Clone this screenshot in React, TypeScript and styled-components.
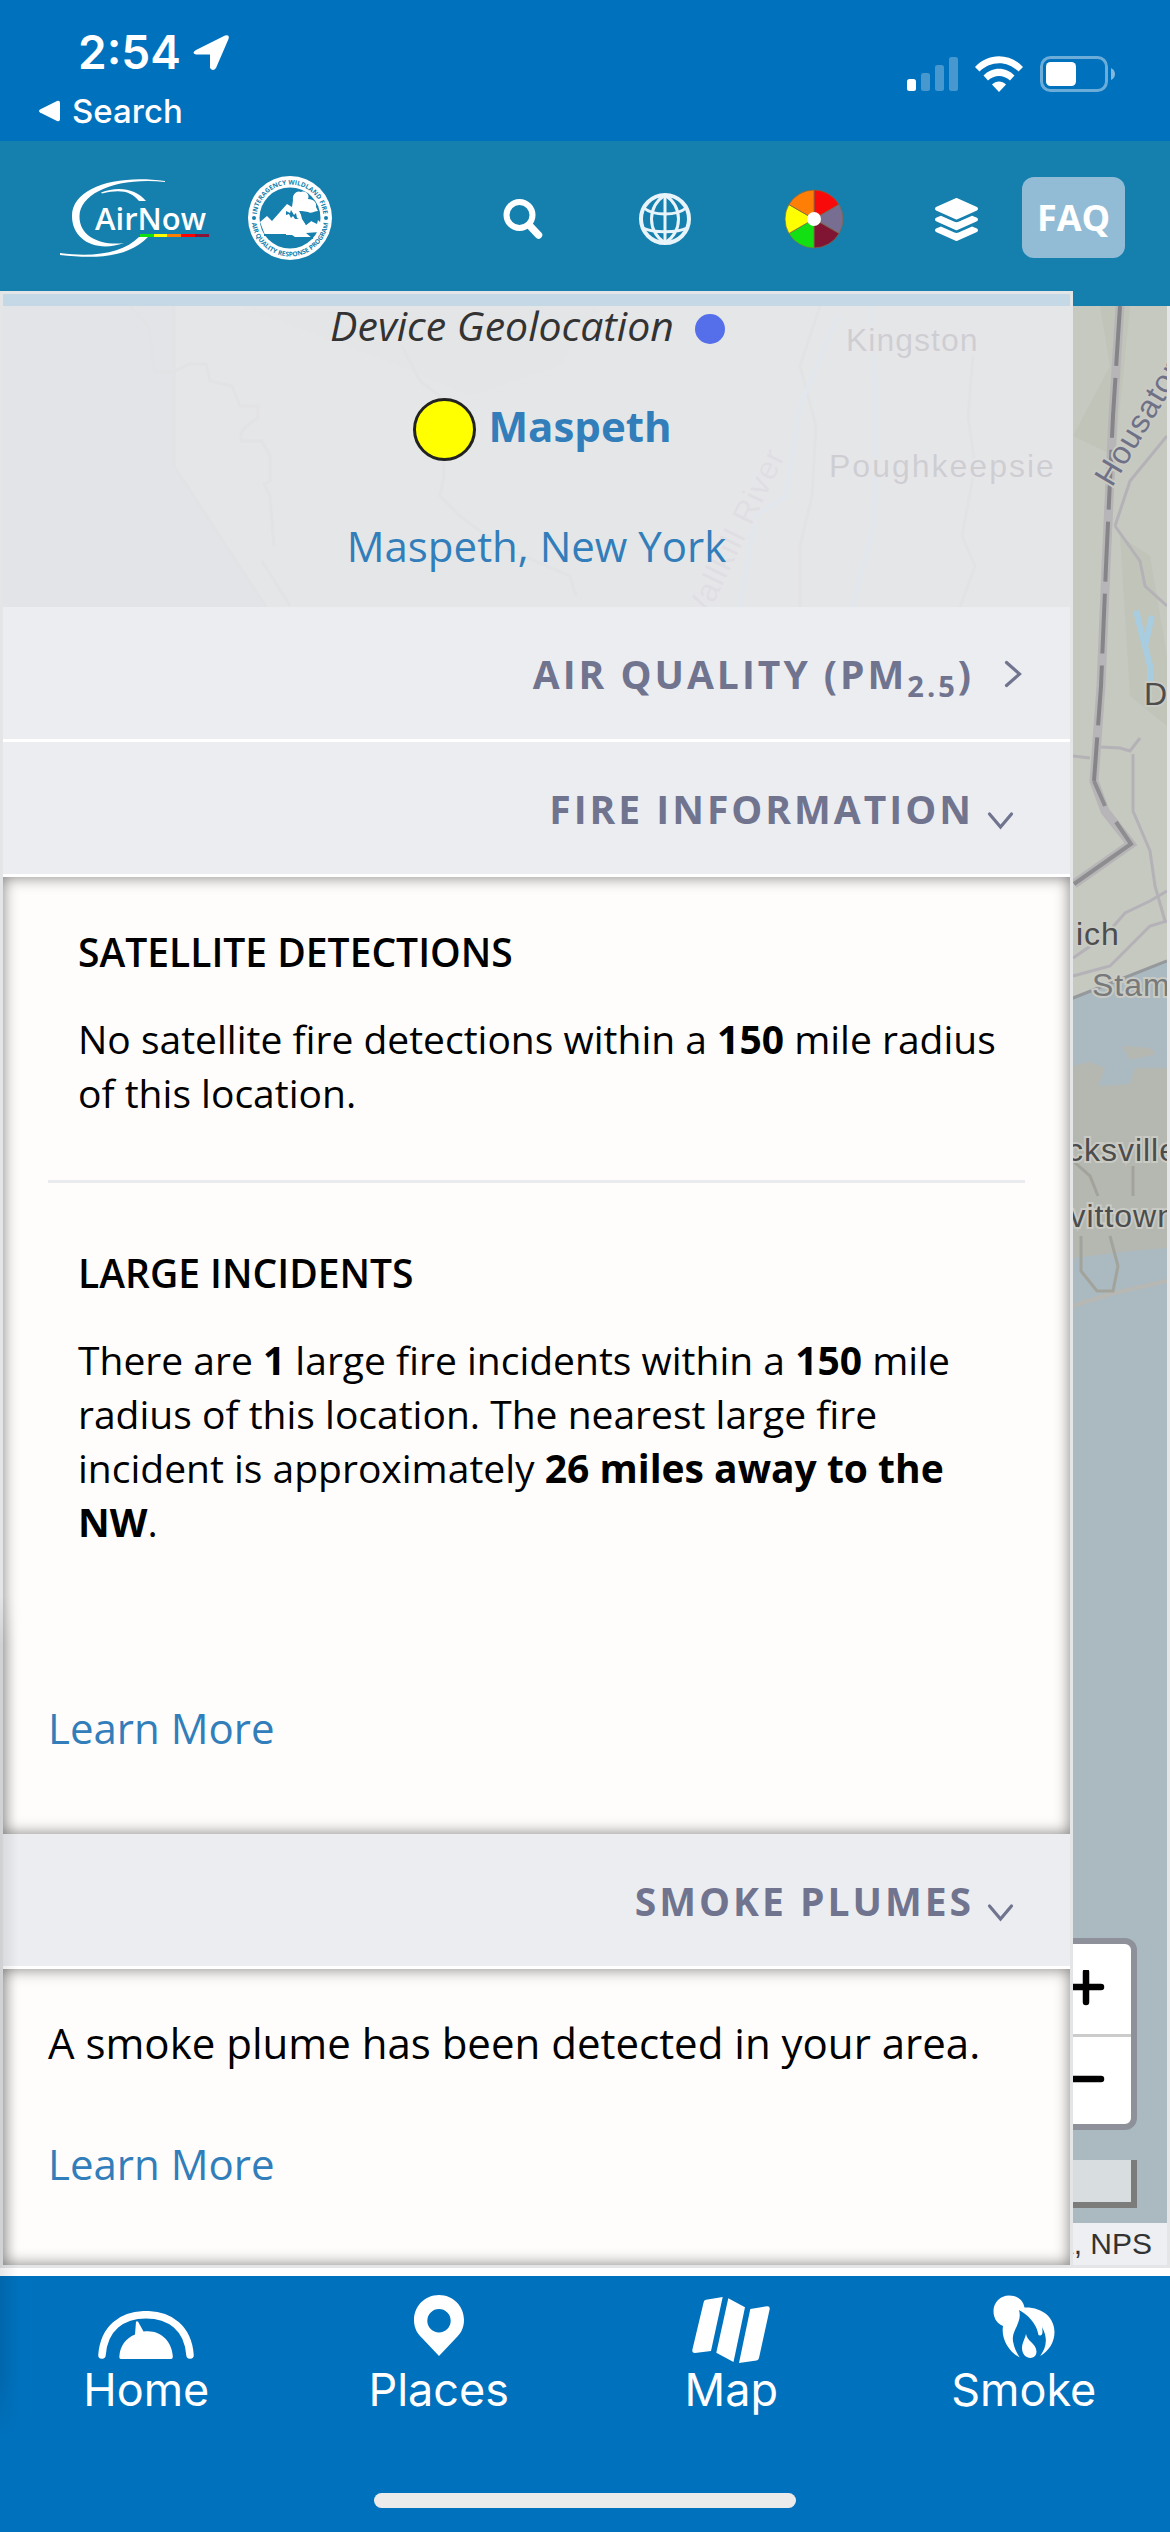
import React from "react";
import styled, { createGlobalStyle } from "styled-components";
import { FaLayerGroup } from "react-icons/fa";

const color = {
  brand: "#0071bd",
  header: "#157fad",
  link: "#327eba",
  heading: "#70748f",
  row: "#ecedf1",
  edge: "#e4e5e6",
  paper: "#fefdfb",
};

const uiFont = `Inter, "Liberation Sans", sans-serif`;
const textFont = `"Open Sans", "Noto Sans", sans-serif`;

const GlobalStyle = createGlobalStyle`
  *, *::before, *::after { box-sizing: border-box; }
  body { margin: 0; background: #fff; font-family: ${textFont}; color: #000; }
  h1, h2, h3, p { margin: 0; }
  a { text-decoration: none; }
  button { border: 0; margin: 0; padding: 0; background: none; font: inherit; color: inherit; cursor: pointer; }
  svg { display: block; flex: none; }
`;

const Screen = styled.div`
  position: relative;
  min-height: 100vh;
  display: flex;
  flex-direction: column;
  overflow: hidden;
`;

/* ---------- status bar ---------- */

const StatusBar = styled.div`
  height: 141px;
  padding: 24px 54px 0 36px;
  display: flex;
  justify-content: space-between;
  background: ${color.brand};
  color: #fff;
  font-family: ${uiFont};
`;

const StatusLeft = styled.div`
  display: flex;
  flex-direction: column;
  gap: 4px;
`;

const Clock = styled.div`
  display: flex;
  align-items: center;
  gap: 12px;
  padding-left: 42px;
  font-size: 46px;
  font-weight: 600;
  line-height: 56px;
`;

const BackLink = styled.button`
  display: flex;
  align-items: center;
  gap: 12px;
  font-size: 33px;
  font-weight: 500;
  line-height: 54px;
`;

const StatusIcons = styled.div`
  display: flex;
  gap: 17px;
  padding-top: 32px;
`;

/* ---------- app header ---------- */

const Header = styled.header`
  height: 165px;
  padding: 0 45px 12px 60px;
  display: flex;
  align-items: center;
  justify-content: space-between;
  background: ${color.header};
`;

const Logos = styled.div`
  display: flex;
  align-items: center;
  gap: 39px;
`;

const Tools = styled.div`
  display: flex;
  align-items: center;
`;

const ToolButton = styled.button<{ $gap: number }>`
  margin-right: ${(p) => p.$gap}px;
  padding-top: 3px;
  color: #fff;
`;

const FaqButton = styled.button`
  width: 103px;
  height: 81px;
  border-radius: 12px;
  background: #92bcd5;
  color: #fff;
  font-size: 36px;
  font-weight: 700;
`;

/* ---------- map and side panel ---------- */

const Stage = styled.main`
  position: relative;
  margin-bottom: 8px;
`;

const MapLayer = styled.div`
  position: absolute;
  inset: 0;
  overflow: hidden;
  border: solid ${color.edge};
  border-width: 0 3px 3px 0;
  background: #abb9c1;

  > svg { position: absolute; top: 0; right: 0; }
`;

const ZoomControl = styled.div`
  position: absolute;
  right: 30px;
  bottom: 135px;
  width: 102px;
  border: 6px solid #8e9199;
  border-radius: 12px;
  background: #fff;
`;

const ZoomButton = styled.button`
  width: 90px;
  height: 90px;
  display: grid;
  place-items: center;

  & + & { border-top: 3px solid #ccc; }
`;

const ScaleBar = styled.div`
  position: absolute;
  right: 30px;
  bottom: 57px;
  width: 150px;
  height: 48px;
  border: solid #7c7d7b;
  border-width: 0 6px 6px 6px;
  background: #d8dee0;
`;

const Attribution = styled.div`
  position: absolute;
  right: 0;
  bottom: 0;
  padding: 0 15px;
  background: #eeeff2;
  color: #333;
  font: 30px/42px "Liberation Sans", sans-serif;
  white-space: nowrap;
`;

const Panel = styled.aside`
  position: relative;
  z-index: 1;
  margin: -15px 97px 0 0;
  border: 3px solid ${color.edge};
`;

const Place = styled.section`
  display: flex;
  flex-direction: column;
  align-items: center;
  padding: 4px 0 31px;
  background: rgba(236, 237, 241, 0.81);
`;

const Geolocation = styled.div`
  display: flex;
  align-items: center;
  gap: 21px;
  margin-right: 18px;
  color: #333;
  font-size: 41px;
  font-style: italic;
  line-height: 54px;
`;

const GeoDot = styled.span`
  width: 30px;
  height: 30px;
  margin-top: 8px;
  border-radius: 50%;
  background: #556eea;
`;

const Monitor = styled.a`
  display: flex;
  gap: 12px;
  margin: 44px 0 55px 12px;
  color: ${color.link};
  font-size: 42px;
  font-weight: 700;
  line-height: 60px;
`;

const AqiDot = styled.span`
  width: 63px;
  height: 63px;
  margin-top: 2px;
  border: 3px solid #222;
  border-radius: 50%;
  background: #ff0;
`;

const TextLink = styled.a`
  color: ${color.link};
  font-size: 42px;
  line-height: 60px;
`;

const RowButton = styled.button`
  width: 100%;
  height: 135px;
  padding-right: 48px;
  display: flex;
  align-items: center;
  justify-content: flex-end;
  border-bottom: 3px solid #fff;
  background: ${color.row};
  color: ${color.heading};
  font-size: 39px;
  font-weight: 700;
  letter-spacing: 3px;
  text-transform: uppercase;

  sub { font-size: 29px; line-height: 0; vertical-align: -8px; }
`;

const Body = styled.div<{ $top: number; $bottom: number }>`
  padding: ${(p) => p.$top}px 45px ${(p) => p.$bottom}px;
  background: ${color.paper};
  box-shadow: inset 0 0 15px rgba(0, 0, 0, 0.5);
`;

const Report = styled.section`
  padding: 0 18px 0 30px;
  font-size: 39px;
  line-height: 54px;
`;

const ReportTitle = styled.h3`
  margin-bottom: 33px;
  font-size: 39px;
  font-weight: 600;
  line-height: 54px;
`;

const Rule = styled.hr`
  height: 3px;
  margin: 60px 0 63px;
  border: 0;
  background: #eaebee;
`;

const Summary = styled.p`
  font-size: 42px;
  line-height: 60px;
`;

const More = styled.p<{ $gap: number }>`
  margin-top: ${(p) => p.$gap}px;
  font-size: 42px;
  line-height: 60px;
`;

/* ---------- bottom navigation ---------- */

const BottomNav = styled.nav`
  flex: 1;
  min-height: 256px;
  padding-bottom: 24px;
  display: flex;
  flex-direction: column;
  justify-content: space-between;
  align-items: center;
  background: ${color.brand};
`;

const Tabs = styled.div`
  width: 100%;
  display: grid;
  grid-template-columns: repeat(4, 1fr);
`;

const Tab = styled.a`
  display: flex;
  flex-direction: column;
  align-items: center;
  color: #fff;
  font-family: ${uiFont};
  font-size: 45px;
  line-height: 54px;
`;

const TabIcon = styled.span<{ $lift: number }>`
  height: 87px;
  padding-bottom: ${(p) => p.$lift}px;
  display: grid;
  place-items: end center;
`;

const HomeIndicator = styled.div`
  width: 36%;
  height: 15px;
  border-radius: 8px;
  background: #ebebeb;
`;

const EdgeShade = styled.div`
  position: absolute;
  z-index: 2;
  left: 0;
  bottom: 96px;
  width: 18px;
  height: 840px;
  background: linear-gradient(to right, rgba(0, 0, 0, 0.09), rgba(0, 0, 0, 0));
  mask-image: linear-gradient(to bottom, transparent, #000 48px, #000 780px, transparent);
  pointer-events: none;
`;

/* ---------- drawings ---------- */

const AirNowLogo = () => (
  <svg width="149" height="80" viewBox="0 0 149 80" role="img" aria-label="AirNow">
    <g fill="#fff">
      <path d="M105 3C55-4 12 10 12 38C12 62 36 75 64 65C42 68 19 59 19.500 38C20 15 57-1 105 4Z" />
      <path d="M41 14.500C57 8 76 10 86 23H79C71 13 60 11 42 15.500Z" />
      <path d="M0 75C36 80 64 74 79 59H88C68 80 35 81 0 77Z" />
      <text x="35" y="52" fontFamily="Open Sans, sans-serif" fontWeight="600" fontSize="31">AirNow</text>
    </g>
    <path fill="#10e010" d="M80 56h14v3H80z" />
    <path fill="#ff0" d="M94 56h14v3H94z" />
    <path fill="#ff7e00" d="M107 56h14v3h-14z" />
    <path fill="#f00" d="M121 56h14v3h-14z" />
    <path fill="#8a1538" d="M135 56h14v3h-14z" />
  </svg>
);

const ProgramSeal = () => (
  <svg width="84" height="84" viewBox="0 0 84 84" role="img" aria-label="Interagency Wildland Fire Air Quality Response Program">
    <circle cx="42" cy="42" r="42" fill="#fff" />
    <circle cx="42" cy="42" r="30.500" fill={color.header} />
    <path id="seal-top" d="M8.500 42a33.500 33.500 0 0 1 67 0" fill="none" />
    <path id="seal-bottom" d="M3.500 42a38.500 38.500 0 0 0 77 0" fill="none" />
    <g fill={color.header} fontFamily="Open Sans, sans-serif" fontWeight="700" fontSize="6.500">
      <text textAnchor="middle"><textPath href="#seal-top" startOffset="50%">INTERAGENCY WILDLAND FIRE</textPath></text>
      <text textAnchor="middle"><textPath href="#seal-bottom" startOffset="50%">AIR QUALITY RESPONSE PROGRAM</textPath></text>
    </g>
    <circle cx="6" cy="42" r="2" fill={color.header} />
    <circle cx="78" cy="42" r="2" fill={color.header} />
    <path fill="#fff" d="M12 46l7-6 5 5 15-17 5 3 1-7c-1-6 4-10 8-8 5-2 9 3 7 7 6 0 9 4 8 8l2 4c-3 0-7 3-10 1-4-1-7-1-9-1l3 5 4 9 4-3 5-5 6 6 3 3-4 6-14 1 6 5-14 1-6-4H17z" />
    <path fill={color.header} d="M38 35l4 2 1-3 3 5 2-2 1 5 2 1-4 0-2-3-2 2-2-4-3 1z" />
    <path fill={color.header} d="M52 35c8 2 12 3 18 1 1 5 0 8-1 12l-6-3-5 4-4-6z" />
    <path fill="none" stroke={color.header} strokeWidth="2" d="M16 59h22M39 62h26" />
  </svg>
);

const SearchIcon = () => (
  <svg width="40" height="40" viewBox="0 0 40 40" fill="none" stroke="#fff">
    <circle cx="16.500" cy="16" r="13" strokeWidth="6" />
    <path d="M27 27l8.500 9" strokeWidth="7.500" strokeLinecap="round" />
  </svg>
);

const GlobeIcon = () => (
  <svg width="52" height="52" viewBox="0 0 52 52" fill="none" stroke="#e9f4fa" strokeWidth="3">
    <circle cx="26" cy="26" r="24" strokeWidth="4" />
    <path d="M26 2v48" />
    <path d="M26 2C8 14 8 38 26 50C44 38 44 14 26 2M5 15c9 8 33 8 42 0M4 35c10 5 34 5 44 0" />
  </svg>
);

const wheel = ["#f90a0a", "#776e92", "#801433", "#12e012", "#ffff00", "#ff7e05"];

const AqiWheelIcon = () => (
  <svg width="60" height="60" viewBox="-30 -30 60 60">
    {wheel.map((fill, i) => (
      <path key={fill} fill={fill} stroke="#7a6a4c" strokeWidth="0.700" d="M0 0V-29A29 29 0 0 1 25.100 -14.500Z" transform={`rotate(${i * 60})`} />
    ))}
    <circle r="7" fill="#fff" />
  </svg>
);

const Chevron = ({ open }: { open: boolean }) => (
  <svg width="48" height="48" viewBox="0 0 48 48" fill="none" stroke={color.heading} strokeWidth="3.200" strokeLinecap="round">
    <path d={open ? "M15.500 30L26.500 43L37.500 30" : "M32.500 13.500L45.500 25L32.500 36.500"} />
  </svg>
);

const SignalIcon = () => (
  <svg width="51" height="36" viewBox="0 0 51 36" fill="#fff">
    <rect y="23" width="9" height="12" rx="2.500" />
    <rect x="14" y="17" width="9" height="18" rx="2.500" opacity=".28" />
    <rect x="28" y="9" width="9" height="26" rx="2.500" opacity=".28" />
    <rect x="42" y="1" width="9" height="34" rx="2.500" opacity=".28" />
  </svg>
);

const WifiIcon = () => (
  <svg width="48" height="36" viewBox="0 0 48 36" fill="#fff">
    <path d="M0 11C13-3.500 35-3.500 48 11L43.500 15.500C32 4.500 16 4.500 4.500 15.500Z" />
    <path d="M8.500 19.500C17 10.500 31 10.500 39.500 19.500L35 24.500C28.500 18.500 19.500 18.500 13 24.500Z" />
    <path d="M17 28.500C21 24.500 27 24.500 31 28.500L24 36Z" />
  </svg>
);

const BatteryIcon = () => (
  <svg width="76" height="36" viewBox="0 0 76 36">
    <rect x="1.500" y="1.500" width="65" height="33" rx="9" fill="none" stroke="#fff" strokeWidth="3" opacity=".42" />
    <rect x="6" y="6" width="30" height="24" rx="4.500" fill="#fff" />
    <path d="M71 12q4 2 4 6t-4 6z" fill="#fff" opacity=".5" />
  </svg>
);

const LocationArrow = () => (
  <svg width="37" height="37" viewBox="0 0 37 37">
    <path d="M3 16L32 1.500Q37 0 35.500 5L23 34Q20 38 17 34V20.500H3Q-2 19 3 16Z" fill="#fff" />
  </svg>
);

const BackTriangle = () => (
  <svg width="24" height="22" viewBox="0 0 24 22">
    <path d="M4 9.500L21 1Q24 0 24 3V19Q24 22 21 21L4 12.500Q2 11 4 9.500Z" fill="#fff" />
  </svg>
);

const HomeIcon = () => (
  <svg width="96" height="48" viewBox="0 0 96 48">
    <path d="M4 44C6 17 24 3.700 48 3.700S90 17 92 44" fill="none" stroke="#fff" strokeWidth="7.500" strokeLinecap="round" />
    <path d="M23 48Q21 48 21.400 45C22 35 28 27 37 23.500L38 10.500L40 10.500L45.500 20.500C62 18 74 30 74.800 45Q75 48 73 48Z" fill="#fff" />
  </svg>
);

const PinIcon = () => (
  <svg width="52" height="62" viewBox="0 0 52 62">
    <path fillRule="evenodd" fill="#fff" d="M26 0C40 0 51 11 51 25C51 34 47 39 43 43L26 61L9 43C5 39 1 34 1 25C1 11 12 0 26 0ZM26 14a11.700 11.700 0 1 0 0 23.400a11.700 11.700 0 1 0 0-23.400Z" />
  </svg>
);

const MapIcon = () => (
  <svg width="78" height="66" viewBox="0 0 78 66" fill="#fff">
    <path d="M11.700 5Q12 3 14 2.700L30.700 0L19 54L3 56Q0 56 .300 53Z" />
    <path d="M36.300 1.300L53 10.300L41.500 65L24.300 55.700Z" />
    <path d="M58.300 12L75 9.300Q78 9 77.700 12L67 61Q66.500 63 64.500 63.500L47 66Z" />
  </svg>
);

const SmokeIcon = () => (
  <svg width="62" height="64" viewBox="0 0 62 64" fill="#fff">
    <path d="M26 15C30 28 17 36 20.400 48C21.500 54 24 58 26.700 62.500C15 56 8 43 10 31C3 28 .500 22 .500 16A15.500 15.500 0 0 1 16 .500C24 .500 30 5 31.500 12.500C50 12 61.500 23 61.500 37C61.500 47 56 56 47.200 61C53 53 55.500 44 49 32Q50.500 40 47.500 40.500Q45 41 45 38C43 28 35 20 26 15Z" />
    <path d="M33 39C34 46 43.500 49 43.500 56.500C43.500 66 29 65 29 53C29 48 32 44 33 39Z" />
  </svg>
);

const mapLabel = {
  fontFamily: "Liberation Sans, sans-serif",
  fontSize: 32,
  fill: "#4c4d4c",
  stroke: "#c9cac4",
  strokeWidth: 4,
  paintOrder: "stroke",
  letterSpacing: 1,
} as const;

const BaseMap = () => (
  <svg width="1167" height="1962" viewBox="0 0 1167 1962" aria-hidden="true">
    <path fill="#c6c9c0" d="M0 0H1167V655L1073 692L1000 730H0Z" />
    <path fill="#b9bfbf" d="M0 0H174V160L266 301V420H0Z" />
    <path fill="#bec2b7" d="M240 0H600L560 60L470 90L400 60ZM1073 130L1110 60L1100 0H1130L1115 150ZM1120 230L1150 250L1167 350V420L1130 390Z" opacity=".7" />
    <g fill="none" stroke="#b5b8b0" strokeWidth="3">
      <path d="M174 0V160L266 301M130 0L148 20L154 60L156 66H172L190 58H206L210 75L232 80L240 100H258V112Q236 125 242 135H262L270 150V175L264 178L270 190L274 240M262 255L290 300" />
      <path d="M402 40L420 75L440 90L444 170L440 190L460 210L500 240L570 270L576 290M820 0L800 60L816 120L812 190L800 240V301M973 50L968 110L975 160L962 230L975 260L960 301" />
    </g>
    <g fill="none" stroke="#b6cfda" strokeWidth="4">
      <path d="M872 0L876 120L874 220L852 301M838 10L800 100L786 190L755 210L740 301" />
    </g>
    <g fill="none" stroke="#b4b2b7" strokeWidth="5">
      <path d="M1073 450L1090 452M1100 441L1120 442L1130 445L1140 432M1133 448V505L1150 545L1155 580L1165 615M1115 220L1140 255L1145 280L1167 300M1167 130L1130 175L1115 220" strokeWidth="3" />
      <path d="M1073 652L1105 630L1125 607L1150 595L1167 585M1073 670L1110 660L1130 640L1150 620L1167 615" strokeWidth="3" />
      <path d="M1120 0L1113 110L1106 260L1101 380L1094 475L1105 505L1131 538L1074 578" strokeWidth="9" stroke="#b7b5b8" />
      <path d="M1120 0L1113 110L1106 260L1101 380L1094 475" stroke="#858587" strokeWidth="4" strokeDasharray="60 12" />
      <path d="M1094 475L1105 500M1116 516L1131 538L1074 578" stroke="#8d8d90" strokeWidth="4" />
    </g>
    <path d="M1136 305L1150 360V380M1152 310L1145 340" fill="none" stroke="#a9cde0" strokeWidth="6" />
    <path d="M1000 724L1073 692L1167 655" fill="none" stroke="#96999c" strokeWidth="3" />
    <path fill="#b5b7b1" d="M1073 760L1090 756L1105 762L1098 780L1130 778L1135 762L1167 762V942L1130 945L1073 952Z" />
    <path fill="#b5b7b1" d="M1122 740L1150 742L1156 748L1130 754Z" />
    <path d="M1073 1000L1110 988L1167 975" fill="none" stroke="#b7b8b4" strokeWidth="4" />
    <path d="M1081 930V965L1097 985H1113L1118 960L1110 930M1073 855L1090 870L1098 890M1133 860V890" fill="none" stroke="#a2a39b" strokeWidth="3" />
    <g {...mapLabel}>
      <text x="846" y="45">Kingston</text>
      <text x="829" y="171" letterSpacing="2">Poughkeepsie</text>
      <text x="866" y="325">Beacon</text>
      <text x="1144" y="399">Danbury</text>
      <text x="1076" y="639">ich</text>
      <text x="1092" y="690" fill="#77797a">Stamford</text>
      <text x="1178" y="855" textAnchor="end">Hicksville</text>
      <text x="1176" y="921" textAnchor="end">Levittown</text>
      <text transform="translate(1112 182) rotate(-59)" fill="#6f7187">Housatonic</text>
      <text transform="translate(700 325) rotate(-64)" fill="#a3a5a4">Wallkill River</text>
    </g>
  </svg>
);

const tabs = [
  { label: "Home", icon: <HomeIcon />, lift: 4 },
  { label: "Places", icon: <PinIcon />, lift: 6 },
  { label: "Map", icon: <MapIcon />, lift: 0 },
  { label: "Smoke", icon: <SmokeIcon />, lift: 4 },
];

export default function App() {
  return (
    <Screen>
      <GlobalStyle />
      <StatusBar>
        <StatusLeft>
          <Clock>2:54 <LocationArrow /></Clock>
          <BackLink><BackTriangle />Search</BackLink>
        </StatusLeft>
        <StatusIcons>
          <SignalIcon />
          <WifiIcon />
          <BatteryIcon />
        </StatusIcons>
      </StatusBar>

      <Header>
        <Logos>
          <AirNowLogo />
          <ProgramSeal />
        </Logos>
        <Tools>
          <ToolButton $gap={96} aria-label="Search"><SearchIcon /></ToolButton>
          <ToolButton $gap={93} aria-label="Language"><GlobeIcon /></ToolButton>
          <ToolButton $gap={91} aria-label="Air quality index"><AqiWheelIcon /></ToolButton>
          <ToolButton $gap={44} aria-label="Layers"><FaLayerGroup size={43} /></ToolButton>
          <FaqButton>FAQ</FaqButton>
        </Tools>
      </Header>

      <Stage>
        <MapLayer>
          <BaseMap />
          <ZoomControl>
            <ZoomButton aria-label="Zoom in">
              <svg width="38" height="38" viewBox="0 0 38 38" stroke="#000" strokeWidth="6.500" strokeLinecap="round">
                <path d="M4 17H34M19 2V32" />
              </svg>
            </ZoomButton>
            <ZoomButton aria-label="Zoom out">
              <svg width="38" height="38" viewBox="0 0 38 38" stroke="#000" strokeWidth="6.500" strokeLinecap="round">
                <path d="M4 17H34" />
              </svg>
            </ZoomButton>
          </ZoomControl>
          <ScaleBar />
          <Attribution>USDA, NPS</Attribution>
        </MapLayer>

        <Panel>
          <Place>
            <Geolocation>Device Geolocation<GeoDot /></Geolocation>
            <Monitor href="#monitor"><AqiDot />Maspeth</Monitor>
            <TextLink href="#place">Maspeth, New York</TextLink>
          </Place>

          <RowButton aria-expanded={false}>
            <span>Air Quality (PM<sub>2.5</sub>)</span>
            <Chevron open={false} />
          </RowButton>

          <RowButton aria-expanded>
            <span>Fire Information</span>
            <Chevron open />
          </RowButton>
          <Body $top={48} $bottom={76}>
            <Report>
              <ReportTitle>SATELLITE DETECTIONS</ReportTitle>
              <p>No satellite fire detections within a <b>150</b> mile radius of this location.</p>
            </Report>
            <Rule />
            <Report>
              <ReportTitle>LARGE INCIDENTS</ReportTitle>
              <p>
                There are <b>1</b> large fire incidents within a <b>150</b> mile radius of this location. The
                nearest large fire incident is approximately <b>26 miles away to the NW</b>.
              </p>
            </Report>
            <More $gap={149}><TextLink href="#fire">Learn More</TextLink></More>
          </Body>

          <RowButton aria-expanded>
            <span>Smoke Plumes</span>
            <Chevron open />
          </RowButton>
          <Body $top={44} $bottom={71}>
            <Summary>A smoke plume has been detected in your area.</Summary>
            <More $gap={61}><TextLink href="#smoke">Learn More</TextLink></More>
          </Body>
        </Panel>
      </Stage>

      <BottomNav>
        <Tabs>
          {tabs.map((tab) => (
            <Tab key={tab.label} href={`#${tab.label}`}>
              <TabIcon $lift={tab.lift}>{tab.icon}</TabIcon>
              {tab.label}
            </Tab>
          ))}
        </Tabs>
        <HomeIndicator />
      </BottomNav>
      <EdgeShade />
    </Screen>
  );
}
